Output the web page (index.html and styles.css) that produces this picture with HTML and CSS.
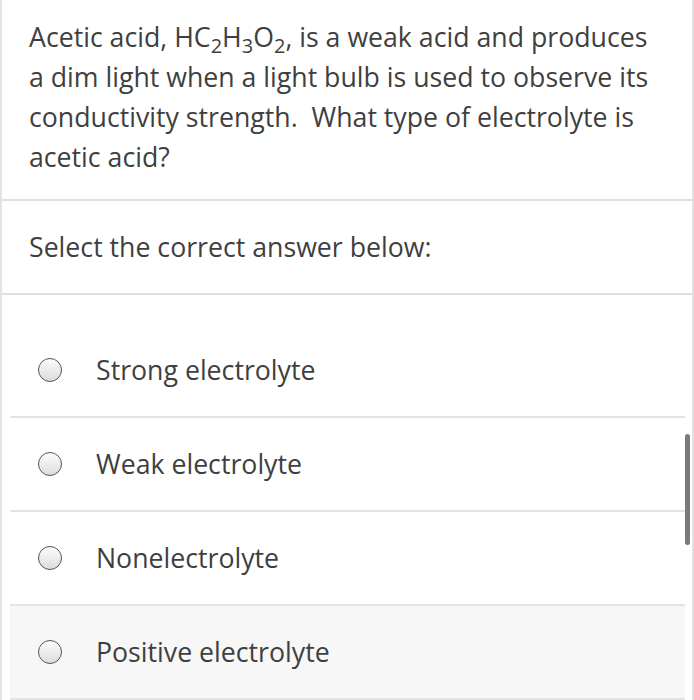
FILE: index.html
```html
<!DOCTYPE html>
<html>
<head>
<meta charset="utf-8">
<link rel="stylesheet" href="styles.css">
</head>
<body>
<div class="page">
  <div class="question">
    <p>Acetic acid, HC<sub>2</sub>H<sub>3</sub>O<sub>2</sub>, is a weak acid and produces a dim light when a light bulb is used to observe its conductivity strength.&nbsp; What type of electrolyte is acetic acid?</p>
  </div>
  <div class="prompt">Select the correct answer below:</div>
  <div class="options">
    <label class="option"><span class="radio"></span><span class="label">Strong electrolyte</span></label>
    <label class="option"><span class="radio"></span><span class="label">Weak electrolyte</span></label>
    <label class="option"><span class="radio"></span><span class="label">Nonelectrolyte</span></label>
    <label class="option hover"><span class="radio"></span><span class="label">Positive electrolyte</span></label>
    <div class="scrollbar"></div>
  </div>
</div>
</body>
</html>
```
FILE: styles.css
```css
html, body {
  margin: 0;
  padding: 0;
  background: #fff;
}
body {
  font-family: "Open Sans", "Noto Sans", sans-serif;
  color: #3f3f3f;
  font-size: 26.7px;
}
.page {
  width: 694px;
  height: 700px;
  box-sizing: border-box;
  border-left: 2px solid #e2e2e2;
  border-right: 2px solid #e2e2e2;
  overflow: hidden;
}
.question {
  padding: 17px 36px 22px 27px;
  border-bottom: 2px solid #e0e0e0;
}
.question p {
  margin: 0;
  line-height: 40px;
}
sub {
  font-size: 20px;
  line-height: 0;
  vertical-align: -6px;
}
.prompt {
  padding: 26px 26px 26px 27px;
  line-height: 40px;
  border-bottom: 2px solid #e0e0e0;
}
.options {
  position: relative;
  padding: 29px 7px 0 8px;
}
.option {
  display: flex;
  align-items: center;
  height: 92px;
  border-bottom: 2px solid #e3e3e3;
  padding-left: 28px;
}
.option.hover {
  background: #f7f7f7;
}
.radio {
  width: 22px;
  height: 22px;
  border-radius: 50%;
  border: 1.6px solid #555;
  background: linear-gradient(#fcfcfc, #dcdcdc);
  flex: none;
  margin-right: 34px;
}
.label {
  line-height: 40px;
}
.scrollbar {
  position: absolute;
  right: 2px;
  top: 139px;
  width: 5px;
  height: 111px;
  border-radius: 3px;
  background: #7a7a7a;
}
```
